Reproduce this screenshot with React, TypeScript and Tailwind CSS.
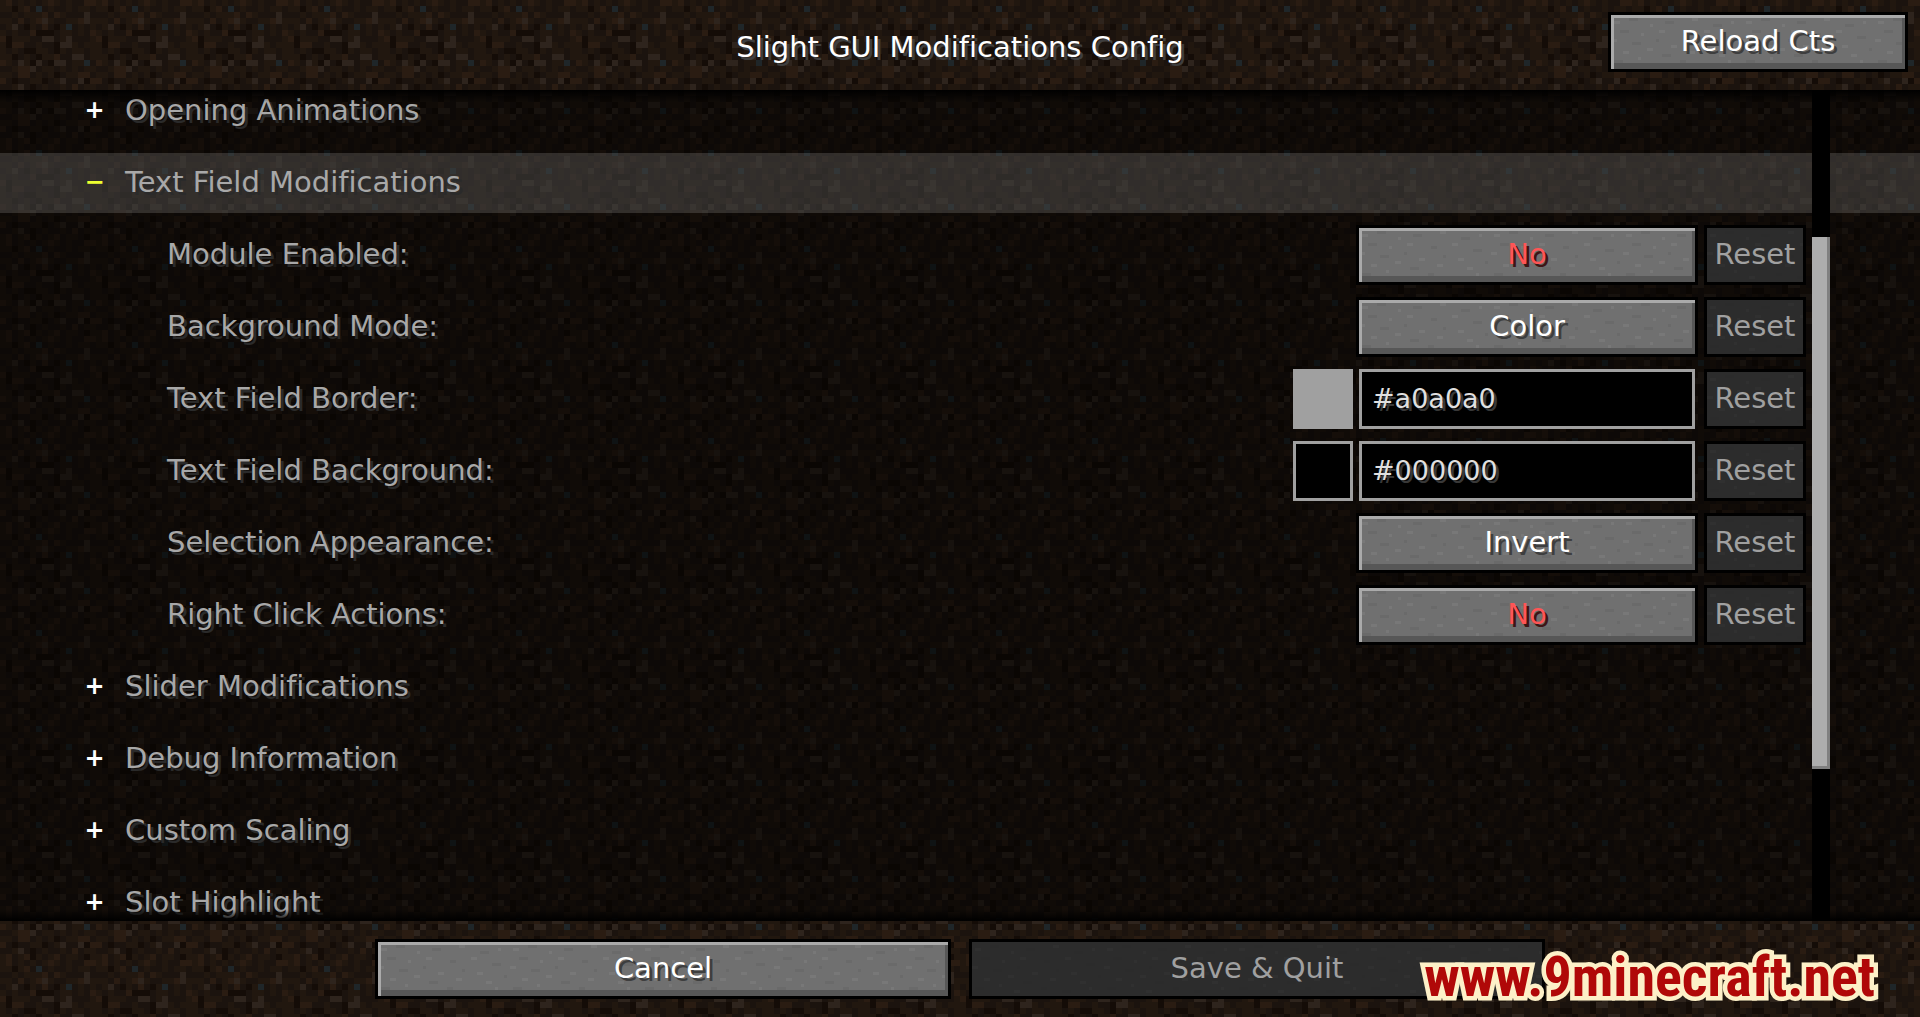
import { useState } from 'react';
import type { ButtonHTMLAttributes } from 'react';
import clsx from 'clsx';

// 16x16 dirt tile, one character per texel
const DIRT = [
  '2312121232121133',
  '220231b121121221',
  '1121222313211141',
  '2213123421122342',
  '12410213102b1212',
  '2121130001221213',
  '3022211441241112',
  '2033112110442122',
  '2121002210212212',
  '2201210223114412',
  '32142041044122b1',
  '1123341221212122',
  '2213312120122331',
  '3101122012411403',
  '1124101211213122',
  '2312302123122102',
];

const DIRT_COLORS: Record<string, string> = {
  '0': '#140c07',
  '1': '#1b130e',
  '2': '#21170f',
  '3': '#2a1c12',
  '4': '#2e241d',
  b: '#1f2629',
};

// x, y, width and tone of the flecks on a stone button
const FLECKS: [number, number, number, 'light' | 'dark'][] = [
  [3, 6, 6, 'light'], [18, 3, 9, 'dark'], [39, 9, 3, 'light'], [54, 6, 9, 'dark'],
  [81, 3, 6, 'light'], [102, 9, 9, 'dark'], [120, 6, 3, 'light'], [9, 15, 9, 'dark'],
  [30, 18, 3, 'light'], [48, 15, 6, 'light'], [72, 18, 6, 'dark'], [93, 15, 6, 'light'],
  [114, 21, 9, 'dark'], [0, 24, 6, 'light'], [21, 27, 9, 'dark'], [45, 24, 3, 'dark'],
  [60, 30, 6, 'light'], [84, 27, 3, 'dark'], [99, 30, 6, 'light'], [12, 36, 6, 'light'],
  [36, 33, 6, 'light'], [51, 39, 9, 'dark'], [78, 36, 6, 'light'], [108, 39, 6, 'light'],
  [126, 33, 3, 'dark'], [3, 45, 9, 'dark'], [27, 42, 3, 'light'], [42, 48, 6, 'light'],
  [69, 45, 6, 'dark'], [90, 48, 9, 'dark'], [117, 45, 3, 'light'],
];

const TEXT_WHITE = 'text-white [text-shadow:3px_3px_0_#3e3e3e]';
const TEXT_GRAY = 'text-[#a8a8a8] [text-shadow:3px_3px_0_#2a2a2a]';
const TEXT_RED = 'text-[#ff5555] [text-shadow:3px_3px_0_#3f1515]';

function Textures() {
  return (
    <svg width="0" height="0" className="absolute" aria-hidden="true">
      <defs>
        <pattern id="dirt" width="96" height="96" patternUnits="userSpaceOnUse">
          {DIRT.map((row, y) =>
            row.split('').map((texel, x) => (
              <rect key={`${x}-${y}`} x={x * 6} y={y * 6} width="6" height="6" fill={DIRT_COLORS[texel]} shapeRendering="crispEdges" />
            )),
          )}
        </pattern>
        <pattern id="dirt-scrolled" href="#dirt" y="54" />
        <pattern id="stone" width="132" height="54" patternUnits="userSpaceOnUse">
          {FLECKS.map(([x, y, width, tone]) => (
            <rect
              key={`${x}-${y}`}
              x={x}
              y={y}
              width={width}
              height="3"
              fill={tone === 'light' ? '#ffffff' : '#000000'}
              opacity={tone === 'light' ? 0.06 : 0.05}
            />
          ))}
        </pattern>
      </defs>
    </svg>
  );
}

function Texture({ fill, className }: { fill: string; className?: string }) {
  return (
    <svg width="100%" height="100%" className={clsx('absolute inset-0 pointer-events-none', className)} aria-hidden="true">
      <rect width="100%" height="100%" fill={fill} />
    </svg>
  );
}

interface StoneButtonProps extends ButtonHTMLAttributes<HTMLButtonElement> {
  tone?: string;
}

function StoneButton({ tone = TEXT_WHITE, className, disabled, children, ...rest }: StoneButtonProps) {
  return (
    <button
      type="button"
      disabled={disabled}
      className={clsx(
        'relative h-[60px] shrink-0 border-3 border-black pb-[2px]',
        disabled ? 'bg-[#2c2c2c] text-[#a0a0a0]' : 'bg-[#707070]',
        !disabled && tone,
        className,
      )}
      {...rest}
    >
      <Texture fill="url(#stone)" className={disabled ? 'opacity-40' : ''} />
      {!disabled && (
        <span className="absolute inset-0 shadow-[inset_3px_3px_0_#aaaaaa,inset_-3px_-6px_0_#575757]" />
      )}
      <span className="relative">{children}</span>
    </button>
  );
}

interface CategoryProps {
  title: string;
  open?: boolean;
}

function Category({ title, open = false }: CategoryProps) {
  return (
    <button
      type="button"
      aria-expanded={open}
      className={clsx('flex h-[60px] w-full shrink-0 items-center gap-5 pb-[2px] pl-[84px] text-left', open && 'bg-white/15')}
    >
      <span className={clsx('w-[21px] text-center text-2xl font-bold', open ? 'text-[#eeff30]' : 'text-white')}>
        {open ? '−' : '+'}
      </span>
      <span className={TEXT_GRAY}>{title}</span>
    </button>
  );
}

type Entry =
  | { id: string; label: string; kind: 'toggle' }
  | { id: string; label: string; kind: 'mode'; value: string }
  | { id: string; label: string; kind: 'color'; value: string };

const ENTRIES: Entry[] = [
  { id: 'module-enabled', label: 'Module Enabled:', kind: 'toggle' },
  { id: 'background-mode', label: 'Background Mode:', kind: 'mode', value: 'Color' },
  { id: 'field-border', label: 'Text Field Border:', kind: 'color', value: '#a0a0a0' },
  { id: 'field-background', label: 'Text Field Background:', kind: 'color', value: '#000000' },
  { id: 'selection', label: 'Selection Appearance:', kind: 'mode', value: 'Invert' },
  { id: 'right-click', label: 'Right Click Actions:', kind: 'toggle' },
];

function ColorField({ id, initial }: { id: string; initial: string }) {
  const [value, setValue] = useState(initial);

  return (
    <div className="flex gap-[6px] pr-[3px]">
      <span className="size-[60px] border-3 border-[#a0a0a0]" style={{ backgroundColor: value }} />
      <input
        id={id}
        type="text"
        value={value}
        onChange={(e) => setValue(e.target.value)}
        className="h-[60px] w-[336px] border-3 border-[#a0a0a0] bg-black px-[10px] pb-[2px] text-[27px] text-[#e0e0e0] outline-none [text-shadow:3px_3px_0_#383838]"
      />
    </div>
  );
}

function EntryRow({ entry }: { entry: Entry }) {
  return (
    <div className="flex h-[60px] shrink-0 items-center gap-[6px] pl-[167px] pr-[114px]">
      <label htmlFor={entry.id} className={clsx('mr-auto pb-[2px]', TEXT_GRAY)}>
        {entry.label}
      </label>
      {entry.kind === 'color' ? (
        <ColorField id={entry.id} initial={entry.value} />
      ) : (
        <StoneButton id={entry.id} tone={entry.kind === 'toggle' ? TEXT_RED : TEXT_WHITE} className="w-[342px]">
          {entry.kind === 'toggle' ? 'No' : entry.value}
        </StoneButton>
      )}
      <StoneButton disabled className="w-[102px]">Reset</StoneButton>
    </div>
  );
}

export default function App() {
  return (
    <div className="relative flex h-screen flex-col overflow-hidden bg-[#1e150f] font-['DejaVu_Sans',sans-serif] text-[29px] leading-none [font-variant-ligatures:none]">
      <Textures />
      <Texture fill="url(#dirt)" />

      <header className="relative grid h-[90px] shrink-0 grid-cols-[300px_1fr_300px] p-3">
        <h1 className={clsx('col-start-2 text-center leading-[70px]', TEXT_WHITE)}>Slight GUI Modifications Config</h1>
        <StoneButton>Reload Cts</StoneButton>
      </header>

      <main className="relative min-h-0 flex-1 overflow-hidden bg-black">
        <Texture fill="url(#dirt-scrolled)" className="opacity-50" />

        <div className="relative -mt-[9px] flex flex-col gap-3">
          <Category title="Opening Animations" />
          <Category title="Text Field Modifications" open />
          {ENTRIES.map((entry) => (
            <EntryRow key={entry.id} entry={entry} />
          ))}
          <Category title="Slider Modifications" />
          <Category title="Debug Information" />
          <Category title="Custom Scaling" />
          <Category title="Slot Highlight" />
        </div>

        <div className="absolute inset-x-0 top-0 h-3 bg-linear-to-b from-black to-transparent" />
        <div className="absolute inset-x-0 bottom-0 h-3 bg-linear-to-t from-black to-transparent" />

        <div className="absolute inset-y-0 right-[90px] w-[18px] bg-black pt-[147px]">
          <div className="h-[532px] border-r-3 border-b-3 border-[#808080] bg-[#adadad]" />
        </div>
      </main>

      <footer className="relative flex shrink-0 justify-center gap-[18px] py-[18px]">
        <StoneButton className="w-[576px]">Cancel</StoneButton>
        <StoneButton disabled className="w-[576px]">Save &amp; Quit</StoneButton>
      </footer>

      <p className="absolute right-[45px] bottom-3 font-['Roboto_Condensed','Roboto',sans-serif] text-[56px] leading-none font-bold text-[#b00808] [-webkit-text-stroke:9px_#fdf0c8] [paint-order:stroke_fill] [stroke-linejoin:round]">
        www.9minecraft.net
      </p>
    </div>
  );
}
